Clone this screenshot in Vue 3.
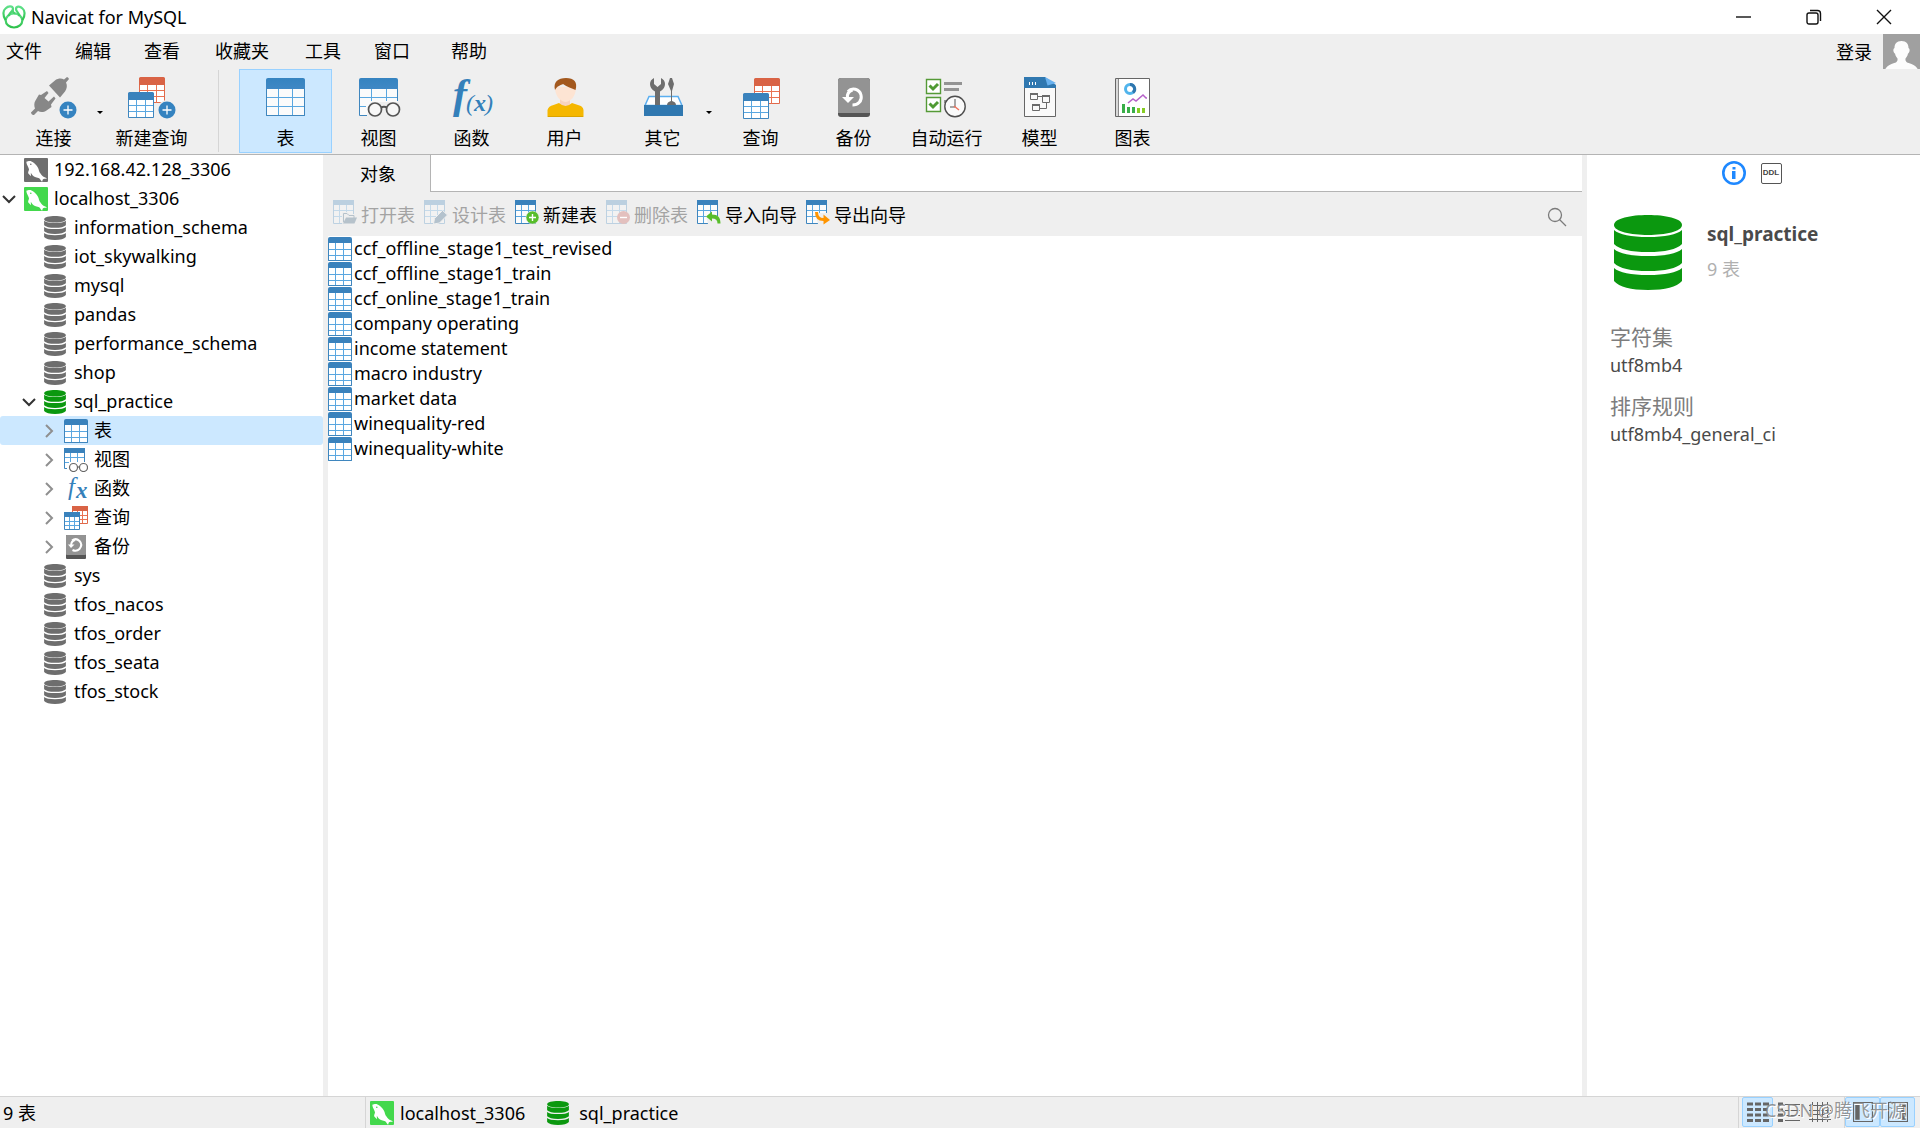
<script setup>
const menus = ['文件', '编辑', '查看', '收藏夹', '工具', '窗口', '帮助']

const createTools = [
  { label: '连接', icon: 'connect', menu: true },
  { label: '新建查询', icon: 'new-query' },
]

const objectTools = [
  { label: '表', icon: 'table-lg', active: true },
  { label: '视图', icon: 'view-lg' },
  { label: '函数', icon: 'function' },
  { label: '用户', icon: 'user' },
  { label: '其它', icon: 'others', menu: true },
  { label: '查询', icon: 'query-lg' },
  { label: '备份', icon: 'backup-lg' },
  { label: '自动运行', icon: 'automation' },
  { label: '模型', icon: 'model' },
  { label: '图表', icon: 'charts' },
]

const tree = [
  { label: '192.168.42.128_3306', icon: 'server-off', level: 0 },
  { label: 'localhost_3306', icon: 'server-on', level: 0, arrow: 'open' },
  { label: 'information_schema', icon: 'db-off', level: 1 },
  { label: 'iot_skywalking', icon: 'db-off', level: 1 },
  { label: 'mysql', icon: 'db-off', level: 1 },
  { label: 'pandas', icon: 'db-off', level: 1 },
  { label: 'performance_schema', icon: 'db-off', level: 1 },
  { label: 'shop', icon: 'db-off', level: 1 },
  { label: 'sql_practice', icon: 'db-on', level: 1, arrow: 'open' },
  { label: '表', icon: 'table', level: 2, arrow: 'closed', active: true },
  { label: '视图', icon: 'view', level: 2, arrow: 'closed' },
  { label: '函数', icon: 'function', level: 2, arrow: 'closed' },
  { label: '查询', icon: 'query', level: 2, arrow: 'closed' },
  { label: '备份', icon: 'backup', level: 2, arrow: 'closed' },
  { label: 'sys', icon: 'db-off', level: 1 },
  { label: 'tfos_nacos', icon: 'db-off', level: 1 },
  { label: 'tfos_order', icon: 'db-off', level: 1 },
  { label: 'tfos_seata', icon: 'db-off', level: 1 },
  { label: 'tfos_stock', icon: 'db-off', level: 1 },
]

const actions = [
  { label: '打开表', icon: 'open', disabled: true },
  { label: '设计表', icon: 'design', disabled: true },
  { label: '新建表', icon: 'add' },
  { label: '删除表', icon: 'remove', disabled: true },
  { label: '导入向导', icon: 'import' },
  { label: '导出向导', icon: 'export' },
]

const tables = [
  'ccf_offline_stage1_test_revised',
  'ccf_offline_stage1_train',
  'ccf_online_stage1_train',
  'company operating',
  'income statement',
  'macro industry',
  'market data',
  'winequality-red',
  'winequality-white',
]
</script>

<template>
  <div class="window">
    <svg class="defs" aria-hidden="true">
      <defs>
        <linearGradient id="g-blue" x1="0" y1="0" x2="0" y2="1">
          <stop offset="0" stop-color="#3583c0" /><stop offset="1" stop-color="#3f88c5" />
        </linearGradient>
        <linearGradient id="g-logo" x1="0" y1="0" x2="0" y2="1">
          <stop offset="0" stop-color="#5fe08a" /><stop offset="1" stop-color="#2fc24c" />
        </linearGradient>
      </defs>
      <symbol id="i-table" viewBox="0 0 24 24">
        <path d="M.5 3v20.500h23V3z" fill="#fff" stroke="#3f86be" />
        <path d="M0 6V2q0-2 2-2h20q2 0 2 2v4z" fill="#3a82bc" />
        <path d="M7.500 6v17M15.500 6v17M1 12.500h22M1 18.500h22" stroke="#5aa7e0" fill="none" />
        <path d="M.5 6v17.500h23V6" fill="none" stroke="#3f86be" />
      </symbol>
      <symbol id="i-view" viewBox="0 0 24 24">
        <path d="M.5 3v17.500h4.500L7 15h13.500V3z" fill="#fff" />
        <path d="M.5 4v16.500H3M20.500 4v10" fill="none" stroke="#3f86be" />
        <path d="M6.500 5v9M13.500 5v9M1 9.500h19M1 14.500h4" stroke="#5aa7e0" fill="none" />
        <path d="M0 0h21v5H0z" fill="#3a82bc" />
        <circle cx="9.500" cy="19.500" r="4" fill="#fff" stroke="#666" stroke-width="1.200" />
        <circle cx="19.500" cy="19.500" r="4" fill="#fff" stroke="#666" stroke-width="1.200" />
        <path d="M13.500 19h2" stroke="#666" stroke-width="1.200" />
      </symbol>
      <symbol id="i-query" viewBox="0 0 24 24">
        <path d="M8.500.5h15v17h-15z" fill="#fff" stroke="#e0694a" />
        <path d="M8 0h16v5H8z" fill="#d96345" />
        <path d="M13.500 5v12M18.500 5v12M9 9.500h14M9 13.500h14" stroke="#ea7352" fill="none" />
        <path d="M.5 6.500h15v17H.5z" fill="#fff" stroke="#3f86be" />
        <path d="M0 6h16v5H0z" fill="#3a82bc" />
        <path d="M5.500 11v12M10.500 11v12M1 15.500h14M1 19.500h14" stroke="#5aa7e0" fill="none" />
      </symbol>
      <symbol id="i-backup" viewBox="0 0 24 24">
        <rect x="2" width="20" height="24" rx="1" fill="#555" />
        <rect x="2" width="20" height="20" rx="1" fill="#939393" />
        <path d="M8 5.500q4-3 7.500.5t0 8q-3 3-7 1" fill="none" stroke="#fff" stroke-width="2" />
        <path d="M4 9.500h6.500L7 13z" fill="#fff" />
        <path d="M7.200 10q0-4 4-5" fill="none" stroke="#fff" stroke-width="2" />
      </symbol>
      <symbol id="i-db" viewBox="0 0 68 75">
        <path d="M0 10C0-3.300 68-3.300 68 10S0 23.300 0 10z" />
        <path d="M0 15q8 7 34 7t34-7v14q-8 8-34 8T0 29z" />
        <path d="M0 34q8 7 34 7t34-7v14q-8 8-34 8T0 48z" />
        <path d="M0 53q8 7 34 7t34-7v13q-8 9-34 9T0 66z" />
      </symbol>
      <symbol id="i-db-off" viewBox="0 0 24 24"><use href="#i-db" width="22" height="24" fill="#6e6e6e" /></symbol>
      <symbol id="i-db-on" viewBox="0 0 24 24"><use href="#i-db" width="22" height="24" fill="#0b980f" /></symbol>
      <symbol id="i-dolphin" viewBox="0 0 24 24">
        <path d="M2.300 3.800C4 3.800 5 2.500 7.500 3.500c2 1 3.800 2.300 5.200 4.300 1.300 2 2 3 2.300 5 .3 1.800 2.500 4 3.500 5.200 1.200 1 3 1.600 4.500 2.500-1.500.4-3.500.3-4.200.9-.5.8-.3 1.800-.8 2.400-1-.6-1.300-2.500-2.800-3.500-2-.8-5-1-6.700-3L6.800 14.800l.2 3.400-2.700-2.600c-.6-1.300.5-2.700.7-4C5 9.500 2.300 7 2.300 3.800z" fill="#fff" />
        <circle cx="6.800" cy="6.200" r=".8" fill="currentColor" />
      </symbol>
      <symbol id="i-server-off" viewBox="0 0 24 24" color="#6e6e6e">
        <rect width="24" height="24" rx="1" fill="#6e6e6e" /><use href="#i-dolphin" width="24" height="24" />
      </symbol>
      <symbol id="i-server-on" viewBox="0 0 24 24" color="#43d84c">
        <rect width="24" height="24" rx="1" fill="#43d84c" /><use href="#i-dolphin" width="24" height="24" />
      </symbol>

      <symbol id="i-plus" viewBox="0 0 18 18">
        <circle cx="9" cy="9" r="8.500" fill="#3583c0" />
        <path d="M9 4.500v9M4.500 9h9" stroke="#fff" stroke-width="1.300" />
      </symbol>
      <symbol id="i-table-lg" viewBox="0 0 48 42">
        <path d="M4.500 3v35.500h38V3z" fill="#fbfbfb" stroke="#3f86be" />
        <path d="M16.500 12v26M30.500 12v26M5 20.500h37M5 29.500h37" stroke="#5aa7e0" />
        <path d="M4.500 11v27.500h38V11" fill="none" stroke="#3f86be" />
        <path d="M4 12V3q0-2 2-2h35q2 0 2 2v9z" fill="url(#g-blue)" />
      </symbol>
      <symbol id="i-view-lg" viewBox="0 0 48 42">
        <path d="M4.500 3v35.500H12L16 25h26.500V3z" fill="#fbfbfb" />
        <path d="M16.500 12v12M31.500 12v12M5 20.500h37M5 29.500h6" stroke="#5aa7e0" />
        <path d="M4.500 11v27.500H12M42.500 11v13" fill="none" stroke="#3f86be" />
        <path d="M4 12V3q0-2 2-2h35q2 0 2 2v9z" fill="url(#g-blue)" />
        <path d="M26 30.500q3-1.500 6 0" stroke="#555" stroke-width="2" fill="none" />
        <circle cx="20" cy="32.500" r="6.500" fill="#f7f7f7" stroke="#555" stroke-width="1.700" />
        <circle cx="38" cy="32.500" r="6.500" fill="#f7f7f7" stroke="#555" stroke-width="1.700" />
      </symbol>
      <symbol id="i-two-tables" viewBox="0 0 37 41">
        <path d="M11.500 1.500h25v24h-25z" fill="#fff" stroke="#e0694a" />
        <path d="M11 8V1.500Q11 0 12.500 0h23Q37 0 37 1.500V8z" fill="#d96345" />
        <path d="M19.500 8v18M28.500 8v18M12 13.500h24M12 19.500h24" stroke="#ea7352" />
        <path d="M.5 16.500h25v24H.5z" fill="#fff" stroke="#3f86be" />
        <path d="M0 23v-6.500Q0 15 1.500 15h23q1.500 0 1.500 1.500V23z" fill="#3a82bc" />
        <path d="M8.500 23v17M17.500 23v17M1 28.500h24M1 34.500h24" stroke="#5aa7e0" />
      </symbol>
      <symbol id="i-query-lg" viewBox="0 0 48 42"><use href="#i-two-tables" x="6" y="1" width="37" height="41" /></symbol>
      <symbol id="i-new-query" viewBox="0 0 48 42">
        <use href="#i-two-tables" width="37" height="41" />
        <circle cx="39" cy="33" r="10" fill="#efefef" />
        <use href="#i-plus" x="30" y="24" width="18" height="18" />
      </symbol>
      <symbol id="i-connect" viewBox="0 0 48 42">
        <path d="M1 35.500 5 31.500c-1-2.500-1-6 .5-8l3.500-6 2 .5 6-4 1.500 2-4 5 4 3.500 5.500-5 1.500 2-4.500 6 .5 2.500-5 3.500c-3 2-6 2-8.500.5l-4 4q-2 .5-3-2z" fill="#878787" />
        <path d="M19 8.500 25.500 3c3-2 6-2 8.500-.5L37 0q1.500.5 2 2l-3 3.500c1.500 3 1 6-1 9L30 20.500z" fill="#878787" />
        <use href="#i-plus" x="29" y="24" width="18" height="18" />
      </symbol>
      <symbol id="i-user" viewBox="0 0 48 42">
        <path d="M19 22h10v7l-5 4-5-4z" fill="#f7d3bf" />
        <path d="M14 10h21c0 8-4 14-10.500 15C18 24 14 18 14 10z" fill="#fde4d3" />
        <path d="M14 13C12 5 17 1 25 1s12 4 9.500 12C31 11 26 10 22 7c-2 1-6 2-8 6z" fill="#a3581d" />
        <path d="M6.500 40V33q1-4 6-5l5.500-2q6.500 6 13 0l6 2q5 1 5.500 5v7z" fill="#f5b700" />
        <path d="M7 39.500h35" stroke="#dba400" />
      </symbol>
      <symbol id="i-others" viewBox="0 0 48 42">
        <path d="M10 19.500h29l4 9H6z" fill="#fff" stroke="#5aaef0" stroke-width="1.500" />
        <path d="M11 7q0-4 4-6v6l3.500 3L22 7V1q4 2 4 6 0 5-5 7.500V28h-5V14.500Q11 12 11 7z" fill="#6d6d6d" />
        <path d="M31 1h2l2 6-2 7v10q4 1 4 4h-9q0-3 4-4V14l-3-7z" fill="#6d6d6d" />
        <path d="M5 28h39v11H5z" fill="#3078b0" />
      </symbol>
      <symbol id="i-backup-lg" viewBox="0 0 48 42">
        <rect x="8" y="1" width="32" height="39" rx="3" fill="#555" />
        <path d="M8 36V4q0-3 3-3h26q3 0 3 3v32z" fill="#939393" />
        <path d="M18 14.500C22 10 29.500 12 31 18s-3 10-8.500 10" fill="none" stroke="#fff" stroke-width="3" />
        <path d="M17.500 21q-1-6 5-8" fill="none" stroke="#fff" stroke-width="3" />
        <path d="M12 20h12l-6 6z" fill="#fff" />
      </symbol>
      <symbol id="i-automation" viewBox="0 0 48 42">
        <path d="M3.500 2.500h14v14h-14zM3.500 20.500h14v14h-14z" fill="#fff" stroke="#559a37" stroke-width="1.400" />
        <path d="M6.500 8.500 10 12l5-5M6.500 26.500 10 30l5-5" stroke="#4f9a33" stroke-width="3" fill="none" />
        <path d="M21 5h18v3H21zM21 11h15v3H21zM21 23h6v3h-6z" fill="#949494" />
        <circle cx="32" cy="29.500" r="10.200" fill="#fafafa" stroke="#4f4f4f" stroke-width="1.400" />
        <path d="M32 22v8h-5" stroke="#555" fill="none" /><path d="m31 29 5 4" stroke="#f0705a" stroke-width="1.500" />
      </symbol>
      <symbol id="i-model" viewBox="0 0 48 42">
        <path d="M8.500 10.500h31v29h-31z" fill="#fafafa" stroke="#666" />
        <path d="M8 0h21l11 8v3H8z" fill="#3078b0" /><path d="m29 0 11 6-8.500 2.500z" fill="#68b1ef" />
        <path d="M13.500 5v3M16.500 5v3M19.500 5v3" stroke="#fff" />
        <path d="M14.500 16.500h7v6h-7zM26.500 18.500h7v7h-7zM16.500 27.500h7v6h-7zM22 19.500h4M30.500 26v5.500H24" fill="none" stroke="#6b6b6b" />
        <path d="M14 16h8v2h-8zM26 18h8v2h-8zM16 27h8v2h-8z" fill="#6b6b6b" />
      </symbol>
      <symbol id="i-charts" viewBox="0 0 48 42">
        <path d="M6.500 1.500h34v38h-34z" fill="#fff" stroke="#666" /><path d="M7 2h2v37H7z" fill="#d8d8d8" /><path d="M9.500 2v37" stroke="#888" />
        <circle cx="21" cy="12" r="4.500" fill="none" stroke="#51b4ec" stroke-width="3" />
        <path d="M21 7.500a4.500 4.500 0 0 1 3 8" fill="none" stroke="#2e76ae" stroke-width="3" />
        <path d="m19 26 5-4 3 2 7-6 3 3h1" stroke="#b662c9" stroke-width="1.500" fill="none" />
        <path d="M13 27h3v9h-3zM18 30h3v6h-3zM23 30h3v6h-3z" fill="#3aae49" /><path d="M28 31h3v5h-3zM33 31h3v5h-3z" fill="#86cc24" />
      </symbol>

      <symbol id="i-base" viewBox="0 0 24 28">
        <path d="M.5 2.500v21h20v-21z" fill="#fff" fill-opacity=".8" stroke="#3f86be" />
        <path d="M6.500 5v18M13.500 5v18M1 10.500h19M1 16.500h19" stroke="#5aa7e0" fill="none" />
        <path d="M0 0h21v5H0z" fill="#3a82bc" />
      </symbol>
      <symbol id="i-open" viewBox="0 0 24 28">
        <g opacity=".28"><use href="#i-base" width="24" height="28" /></g>
        <path d="M9.500 23.500V12.500h5l2 2H22v3h2l-2.500 6z" fill="#efefef" stroke="#efefef" />
        <path d="M10.500 22V13.500h3.500l2 2h5V18" fill="none" stroke="#b6c2cb" />
        <path d="M10 23.500 13 17.500h11l-2.500 6z" fill="#b6c2cb" />
      </symbol>
      <symbol id="i-design" viewBox="0 0 24 28">
        <g opacity=".28"><use href="#i-base" width="24" height="28" /></g>
        <path d="m9.500 24 1-5.500 8-8 5 4.500-8 8z" fill="#b4c2cd" stroke="#efefef" />
      </symbol>
      <symbol id="i-add" viewBox="0 0 24 28">
        <use href="#i-base" width="24" height="28" />
        <circle cx="17.500" cy="17.500" r="6.500" fill="#58bd2b" stroke="#efefef" stroke-width=".5" />
        <path d="M17.500 14v7M14 17.500h7" stroke="#fff" stroke-width="1.400" />
      </symbol>
      <symbol id="i-remove" viewBox="0 0 24 28">
        <g opacity=".28"><use href="#i-base" width="24" height="28" /></g>
        <circle cx="17.500" cy="17.500" r="6.500" fill="#e3c0be" /><path d="M14 17.500h7" stroke="#fff" stroke-width="1.400" />
      </symbol>
      <symbol id="i-import" viewBox="0 0 24 28">
        <use href="#i-base" width="24" height="28" /><path d="M9 16h12v8H11z" fill="#efefef" />
        <path d="m9 16.500 6-5v3c6 0 8.500 3 8.500 9h-3q0-5-5.500-5v3z" fill="#58bd2b" />
      </symbol>
      <symbol id="i-export" viewBox="0 0 24 28">
        <use href="#i-base" width="24" height="28" /><path d="M9 13h12v11H12z" fill="#efefef" />
        <path d="M9 12h3q0 6 5.500 6v-3.500l6.500 5.500-6.500 4.500V21Q9 21 9 12z" fill="#ff9500" />
      </symbol>
    </svg>

    <header class="titlebar">
      <svg class="logo" viewBox="0 0 24 24" aria-hidden="true">
        <g fill="none" stroke="url(#g-logo)" stroke-width="2.200">
          <ellipse cx="12" cy="15.500" rx="8.300" ry="7" />
          <path d="M3.500 15C.5 10 1 5.500 3.500 3.500c3-3 7-2.500 7.500 0S7.500 7 6.500 11" />
          <path d="M20.500 15c3-5 2.500-9.500 0-11.500-3-3-6.500-2-6.500.5S16.500 7 17.500 11M11 4q-1 4 2.500 4.500" />
        </g>
      </svg>
      <h1>Navicat for MySQL</h1>
      <div class="win-controls">
        <button aria-label="最小化"><svg viewBox="0 0 16 16"><path d="M0 8h15" /></svg></button>
        <button aria-label="还原"><svg viewBox="0 0 16 16"><rect x="1" y="4" width="11" height="11" rx="2" /><path d="M4 1.500h7.500q3 0 3 3V12" /></svg></button>
        <button aria-label="关闭"><svg viewBox="0 0 16 16"><path d="m1 1 14 14M15 1 1 15" /></svg></button>
      </div>
    </header>

    <div class="menubar">
      <nav class="menus">
        <button v-for="m in menus" :key="m">{{ m }}</button>
      </nav>
      <button class="login">登录</button>
      <svg class="avatar" viewBox="0 0 37 37" aria-hidden="true">
        <path d="M0 0h37v37H0z" fill="#a0a0a0" />
        <path d="M18.500 7c5 0 7 3 7 7 2 1 1 5-.5 5.500-.5 3-2 4-2.500 5-.5 4 2 4 6 5.500q5.500 2 7 7H1.500q1.500-5 7-7c4-1.500 6.500-1.500 6-5.500-.5-1-2-2-2.500-5C10.500 19 9.500 15 11.500 14c0-4 2-7 7-7z" fill="#fdfdfd" />
      </svg>
    </div>

    <div class="toolbar">
      <button v-for="t in createTools" :key="t.label" class="tool" :class="{ split: t.menu }">
        <svg><use :href="'#i-' + t.icon" /></svg>
        <span>{{ t.label }}</span>
        <i v-if="t.menu" class="caret"></i>
      </button>
      <span class="divider"></span>
      <button v-for="t in objectTools" :key="t.label" class="tool" :class="{ split: t.menu, active: t.active }">
        <svg v-if="t.icon === 'function'" class="fx">
          <text x="5" y="31" font-size="42" font-weight="bold">f<tspan x="18" y="34" font-size="24" font-weight="normal">(</tspan><tspan x="26" font-size="24">x</tspan><tspan x="37" font-size="24" font-weight="normal">)</tspan></text>
        </svg>
        <svg v-else><use :href="'#i-' + t.icon" /></svg>
        <span>{{ t.label }}</span>
        <i v-if="t.menu" class="caret"></i>
      </button>
    </div>

    <div class="workspace">
      <ul class="tree">
        <li v-for="n in tree" :key="n.label" :class="['level-' + n.level, { active: n.active }]">
          <svg class="arrow" :class="n.arrow" viewBox="0 0 16 16" aria-hidden="true">
            <path v-if="n.arrow === 'open'" d="m2 5 6 6 6-6" />
            <path v-if="n.arrow === 'closed'" d="m5 2 6 6-6 6" />
          </svg>
          <svg v-if="n.icon === 'function'" class="node-icon fx" aria-hidden="true">
            <text x="4" y="18" font-size="25">f<tspan x="12" y="21" font-size="23" font-weight="bold">x</tspan></text>
          </svg>
          <svg v-else class="node-icon" aria-hidden="true"><use :href="'#i-' + n.icon" /></svg>
          <span>{{ n.label }}</span>
        </li>
      </ul>

      <main class="content">
        <div class="tabs"><button class="tab">对象</button></div>
        <div class="actions">
          <button v-for="a in actions" :key="a.label" :disabled="a.disabled">
            <svg><use :href="'#i-' + a.icon" /></svg><span>{{ a.label }}</span>
          </button>
          <button class="search" aria-label="搜索">
            <svg viewBox="0 0 20 20"><circle cx="8" cy="8" r="6.500" /><path d="m12.500 12.500 6.500 6.500" /></svg>
          </button>
        </div>
        <ul class="objects">
          <li v-for="t in tables" :key="t"><svg aria-hidden="true"><use href="#i-table" /></svg><span>{{ t }}</span></li>
        </ul>
      </main>

      <aside class="info">
        <div class="info-tabs">
          <button aria-label="信息">
            <svg viewBox="0 0 24 24"><circle cx="12" cy="12" r="10.700" fill="none" stroke="#1e88ff" stroke-width="2.600" /><path d="M10 10h3.500v8H10zM10.500 6h3v2.500h-3z" fill="#1e88ff" /></svg>
          </button>
          <button class="ddl">DDL</button>
        </div>
        <div class="summary">
          <svg viewBox="0 0 68 75" aria-hidden="true"><use href="#i-db" fill="#0b980f" /></svg>
          <div>
            <h2>sql_practice</h2>
            <p>9 表</p>
          </div>
        </div>
        <dl>
          <dt>字符集</dt>
          <dd>utf8mb4</dd>
          <dt>排序规则</dt>
          <dd>utf8mb4_general_ci</dd>
        </dl>
      </aside>
    </div>

    <footer class="status">
      <span class="count">9 表</span>
      <div class="path">
        <svg aria-hidden="true"><use href="#i-server-on" /></svg><span>localhost_3306</span>
        <svg aria-hidden="true"><use href="#i-db-on" /></svg><span>sql_practice</span>
      </div>
      <div class="view-modes">
        <button class="on" aria-label="列表"><svg viewBox="0 0 22 20"><path d="M0 2h22M0 7.500h22M0 13h22M0 18.500h22" stroke-width="3" stroke-dasharray="6 2" /></svg></button>
        <button aria-label="详细信息"><svg viewBox="0 0 22 20"><path d="M0 2h5M0 8h5M0 13h5M0 18.500h5" stroke-width="3" /><path d="M7 2.500h15M7 8.500h15M7 13.500h15M7 18.500h15" /></svg></button>
        <button aria-label="ER 图表"><svg viewBox="0 0 22 20"><path d="M0 3.500h22M0 8.500h22M0 12.500h22M0 17.500h22M3.500 0v20M8.500 0v20M13.500 0v20M18.500 0v20" /></svg></button>
      </div>
      <div class="panes">
        <button class="on" aria-label="导航窗格"><svg viewBox="0 0 18 18"><path d="M.5.5h17v17H.5z" /><path d="M4 2v14" stroke-width="4" /></svg></button>
        <button class="on" aria-label="信息窗格"><svg viewBox="0 0 18 18"><path d="M.5.5h17v17H.5z" /><path d="M14 2v14" stroke-width="4" /></svg></button>
      </div>
      <span class="watermark">CSDN @腾飞开源</span>
    </footer>
  </div>
</template>

<style>
body {
  margin: 0;
}
</style>

<style scoped>
.window {
  display: flex;
  flex-direction: column;
  min-height: 100vh;
  background: #fff;
  color: #000;
  font: 18px/24px "Noto Sans", "Noto Sans CJK SC", sans-serif;
}
.window * {
  box-sizing: border-box;
}
.defs {
  position: absolute;
  width: 0;
  height: 0;
}
svg {
  display: block;
  flex: none;
}
button {
  padding: 0;
  border: 0;
  background: none;
  color: inherit;
  font: inherit;
}
ul {
  margin: 0;
  padding: 0;
  list-style: none;
}
.fx {
  overflow: visible;
  fill: #3480ba;
  font-family: "Liberation Serif", serif;
  font-style: italic;
}

.titlebar {
  display: flex;
  align-items: center;
  height: 34px;
}
.logo {
  width: 24px;
  height: 24px;
  margin: 0 5px 0 2px;
}
h1 {
  margin: 0;
  font-size: 18px;
  font-weight: 400;
}
.win-controls {
  display: flex;
  margin: 0 1px 0 auto;
}
.win-controls button {
  display: grid;
  place-items: center;
  width: 70px;
  height: 34px;
}
.win-controls svg {
  width: 16px;
  height: 16px;
  fill: none;
  stroke: #111;
  stroke-width: 1.4;
}

.menubar {
  display: flex;
  align-items: flex-start;
  height: 35px;
  background: #efefef;
}
.menus {
  display: grid;
  flex: 1;
  grid-template-columns: 69px 69px 71px 90px 69px 77px auto;
  padding: 5px 0 0 6px;
}
.menus button {
  text-align: left;
}
.login {
  margin: 6px 11px 0 0;
}
.avatar {
  width: 37px;
  height: 37px;
}

.toolbar {
  display: flex;
  height: 86px;
  padding-left: 2px;
  border-bottom: 1px solid #b4b4b4;
  background: #efefef;
}
.tool {
  position: relative;
  display: flex;
  flex-direction: column;
  align-items: center;
  width: 93px;
  height: 84px;
  padding-top: 7px;
  border: 1px solid transparent;
  white-space: nowrap;
}
.tool.split {
  width: 103px;
}
.tool.active {
  border-color: #99d1ff;
  background: #cce8ff;
}
.tool svg {
  width: 48px;
  height: 42px;
}
.tool span {
  margin-top: 7px;
}
.caret {
  position: absolute;
  right: 1px;
  top: 41px;
  border: 3px solid transparent;
  border-top-color: #000;
}
.divider {
  width: 1px;
  margin: 1px 20px 2px;
  background: #d5d5d5;
}

.workspace {
  display: flex;
  flex: 1;
}
.tree {
  width: 323px;
}
.tree li {
  display: flex;
  align-items: center;
  height: 29px;
  border-radius: 3px;
}
.tree li.active {
  background: #cce8ff;
}
.tree span,
.objects span {
  padding-bottom: 2px;
}
.level-0 {
  padding-left: 1px;
}
.level-1 {
  padding-left: 21px;
}
.level-2 {
  padding-left: 41px;
}
.arrow {
  width: 16px;
  height: 16px;
  margin-right: 7px;
  fill: none;
  stroke: #333;
  stroke-width: 2;
}
.arrow.closed {
  stroke: #8f8f8f;
}
.node-icon {
  width: 24px;
  height: 24px;
  margin-right: 6px;
}

.content {
  flex: 1;
  border-left: 5px solid #efefef;
  border-right: 5px solid #efefef;
}
.tabs {
  display: flex;
  height: 37px;
  border-bottom: 1px solid #b4b4b4;
}
.tab {
  width: 103px;
  height: 37px;
  padding-right: 2px;
  border-right: 1px solid #b4b4b4;
  background: #efefef;
}
.actions {
  display: flex;
  gap: 9px;
  align-items: center;
  height: 44px;
  padding-left: 5px;
  background: #efefef;
}
.actions button {
  display: flex;
  gap: 4px;
  align-items: center;
}
.actions button:disabled {
  color: #a3a3a3;
}
.actions span {
  padding-top: 2px;
}
.actions svg {
  width: 24px;
  height: 28px;
}
.actions .search {
  margin: 5px 15px 0 auto;
}
.actions .search svg {
  width: 20px;
  height: 20px;
  fill: none;
  stroke: #7b7b7b;
  stroke-width: 1.3;
}
.objects li {
  display: flex;
  gap: 2px;
  align-items: center;
  height: 25px;
}
.objects svg {
  width: 24px;
  height: 24px;
}

.info {
  width: 333px;
  color: #4a4a4a;
}
.info-tabs {
  display: flex;
  justify-content: center;
  align-items: center;
  gap: 15px;
  height: 36px;
  padding-right: 4px;
}
.info-tabs svg {
  width: 24px;
  height: 24px;
}
.ddl {
  width: 21px;
  height: 21px;
  border: 1px solid #555;
  border-radius: 2px;
  color: #444;
  font: bold 8px/18px "Liberation Sans", sans-serif;
}
.summary {
  display: flex;
  gap: 25px;
  padding: 24px 0 0 27px;
}
.summary svg {
  width: 68px;
  height: 75px;
}
h2 {
  margin: 7px 0 0;
  font-size: 19px;
  line-height: 24px;
}
.summary p {
  margin: 11px 0 0;
  color: #b0b0b0;
}
dl {
  margin: 33px 0 0 23px;
}
dt {
  color: #7d7d7d;
  font-size: 21px;
  line-height: 28px;
}
dd {
  margin: 0 0 13px;
  line-height: 28px;
}

.status {
  position: relative;
  display: flex;
  height: 32px;
  border-top: 1px solid #d5d5d5;
  background: #efefef;
}
.status svg {
  width: 24px;
  height: 24px;
}
.count {
  width: 365px;
  padding: 4px 3px;
}
.path {
  display: flex;
  flex: 1;
  align-items: center;
  padding-left: 4px;
  border-left: 1px solid #d5d5d5;
}
.path span {
  margin: 0 22px 0 6px;
}
.path span:last-child {
  margin-left: 8px;
}
.view-modes,
.panes {
  display: flex;
  padding-left: 3px;
  border-left: 1px solid #d5d5d5;
}
.view-modes {
  width: 106px;
}
.panes {
  width: 76px;
  padding-left: 0;
}
.status button {
  display: grid;
  place-items: center;
  width: 31px;
  height: 30px;
}
.status .panes button {
  width: 35px;
}
.status button.on {
  border: 1px solid #99d1ff;
  border-radius: 2px;
  background: #cce8ff;
}
.status button svg {
  width: 22px;
  height: 20px;
  fill: none;
  stroke: #666;
}
.watermark {
  position: absolute;
  right: 14px;
  top: 1px;
  color: rgba(125, 125, 125, 0.8);
  text-shadow: 1px 1px 0 #fff;
}
</style>
